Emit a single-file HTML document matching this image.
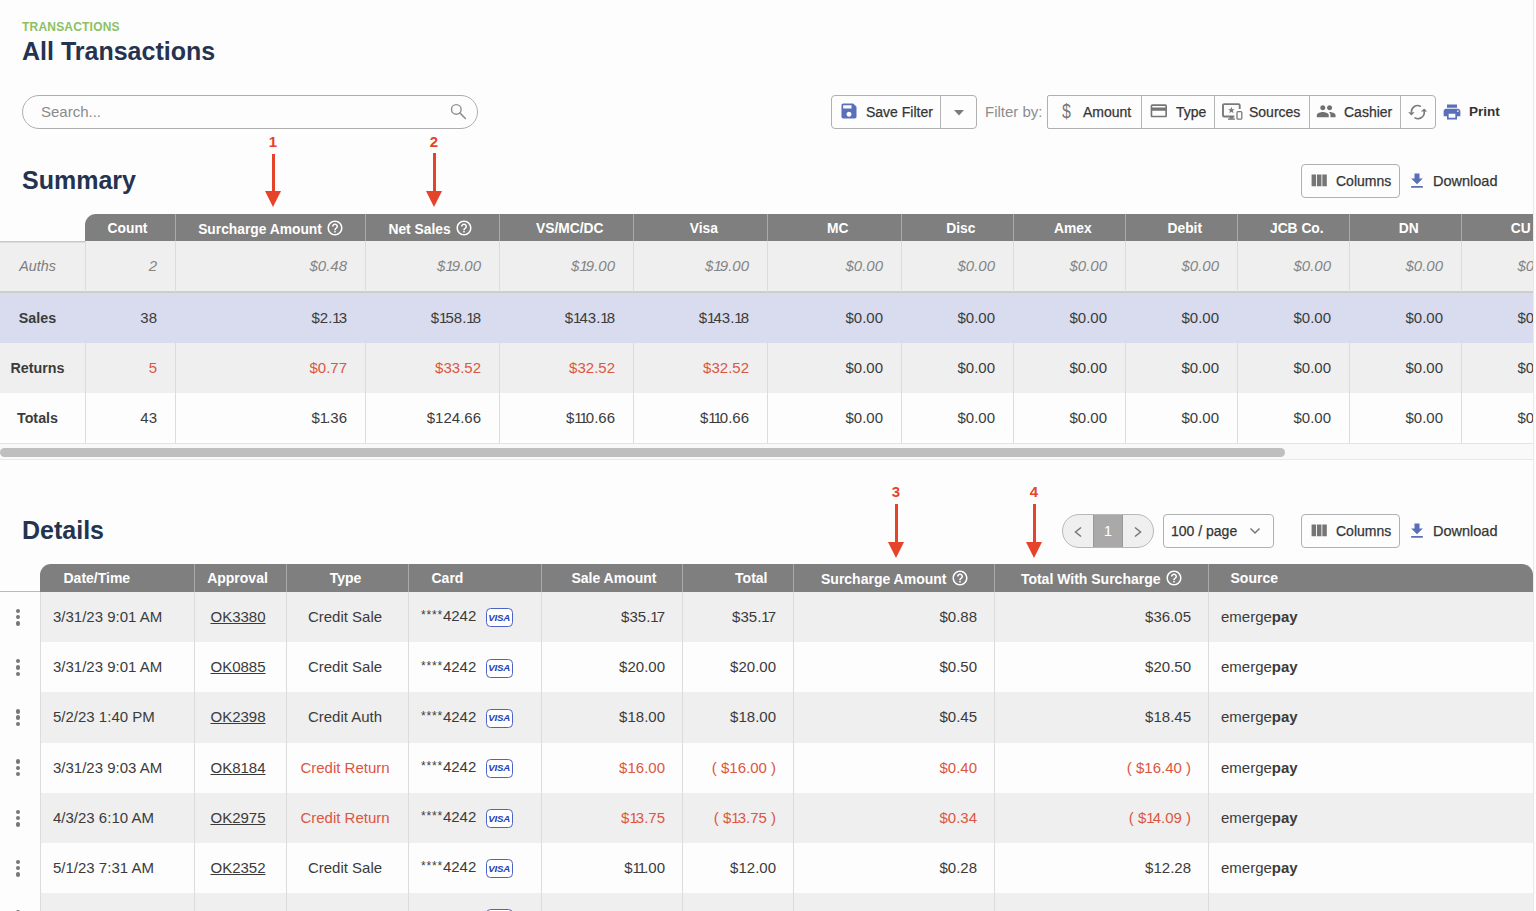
<!DOCTYPE html>
<html><head><meta charset="utf-8">
<style>
*{box-sizing:border-box;margin:0;padding:0}
html,body{width:1536px;height:911px;overflow:hidden;background:#fdfdfd;font-family:"Liberation Sans",sans-serif;color:#3b3b3b}
.abs{position:absolute}
.eyebrow{left:22px;top:20px;font-size:12px;letter-spacing:0.2px;color:#8cc063;font-weight:bold;line-height:14px}
.h1{left:22px;top:36px;font-size:25px;font-weight:bold;color:#24334f;line-height:30px}
.h2{font-size:25px;font-weight:bold;color:#24334f;line-height:30px}
.search{left:22px;top:95px;width:456px;height:33.5px;border:1.3px solid #aeaeae;border-radius:17px;background:#fdfdfd}
.search span{position:absolute;left:18px;top:7px;font-size:15px;color:#8a8a8a}
.btn{border:1.3px solid #b0b0b0;border-radius:4px;background:#fdfdfd;height:33px}
.txt{font-size:14px;color:#3a3a3a;line-height:16px;white-space:nowrap}
.red{color:#dc5642}
.wrap{overflow:hidden}
table{border-collapse:separate;border-spacing:0;table-layout:fixed}
th{background:#7f7f7f;color:#fff;font-weight:bold;font-size:13.8px;height:27px;padding:0;border-left:1px solid #a9a9a9;white-space:nowrap;line-height:16px}
td{padding:0;white-space:nowrap;font-size:15px;border-left:1px solid #dcdcdc;line-height:18px}
th.nb,td.nb{border-left:none;background:transparent}
.sum td{height:50px;text-align:right;padding-right:18px}
.sum th{padding-top:2px}
.sum .q{vertical-align:-3px}
.sum td.lab{text-align:center;padding-right:10px;font-weight:bold;font-size:14.3px;border-left:none}
.sum tr.auth td{font-style:italic;color:#858585;border-bottom:2px solid #cdcdcd;height:52px}
.sum tr.auth td.lab{font-weight:normal;color:#7d7d7d}
.sum tr.sales td{background:#d8dcee}
.sum tr.ret td{background:#efefef}
.sum tr.tot td{background:#fdfdfd;border-bottom:1px solid #e4e4e4;height:51px;padding-bottom:1px}
.sum tr.auth td{background:#efefef}
.sum tr.auth td.lab{box-shadow:inset 0 1.5px 0 #c8c8c8}
.q{display:inline-block;width:18px;height:18px;vertical-align:-4px;margin-left:4px}
.det td{height:50.2px;padding:0 17px 0 12px}
.det th{padding:0 25.5px 0 21.5px;font-size:14px;height:28px}
.det .q{vertical-align:-3px}
.det th.c{padding:0}
.det tr.o td{background:#efefef}
.det tr.e td{background:#fdfdfd}
.det td.kb{background:#fdfdfd !important;border-left:none;padding:0;position:relative}
.kb i{position:absolute;left:16px;width:4.4px;height:4.4px;border-radius:50%;background:#777}

.ast{font-size:12px;vertical-align:2px;letter-spacing:0.8px;margin-right:0px}
.visa{display:inline-block;position:relative;top:1px;width:27px;height:19px;border:1.6px solid #4b64c6;border-radius:4.5px;background:#fff;margin-left:9.5px;vertical-align:-3.5px}
.visa b{position:absolute;left:1.6px;top:3.5px;font-size:9.7px;line-height:10px;font-style:italic;font-weight:bold;color:#2342b3;letter-spacing:-0.2px}
.grp{position:absolute;top:95px;height:34px;border:1.3px solid #b0b0b0;background:#fdfdfd}
.dv{position:absolute;top:95px;width:1.5px;height:34px;background:#b4b4b4}
.lbl{position:absolute;font-size:14px;color:#353535;line-height:16px;white-space:nowrap;-webkit-text-stroke:0.25px #353535}
.n1{font-style:inherit;letter-spacing:-2px}
.arrow{position:absolute;width:15px}
.arrow b{position:absolute;left:0;width:15px;text-align:center;color:#e5432a;font-size:15px;font-weight:bold;line-height:15px}
</style></head><body>
<div class="abs eyebrow">TRANSACTIONS</div>
<div class="abs h1">All Transactions</div>
<div class="abs search"><span>Search...</span></div>
<div class="abs h2" style="left:22px;top:165px">Summary</div>
<div class="abs h2" style="left:22px;top:515px">Details</div>
<div class="abs wrap" style="left:0;top:214px;width:1533px;height:232px">
<table class="sum" style="width:1573px">
<colgroup><col style="width:85px"><col style="width:90px"><col style="width:190px"><col style="width:134px"><col style="width:134px"><col style="width:134px"><col style="width:134px"><col style="width:112px"><col style="width:112px"><col style="width:112px"><col style="width:112px"><col style="width:112px"><col style="width:112px"></colgroup>
<tr>
<th class="nb"></th>
<th style="border-left:none;border-top-left-radius:11px;padding-right:5px">Count</th>
<th style="padding-left:1px">Surcharge Amount<svg class=q viewBox="0 0 24 24"><path fill="#fff" d="M11 18h2v-2h-2v2zm1-16C6.48 2 2 6.48 2 12s4.48 10 10 10 10-4.48 10-10S17.52 2 12 2zm0 18c-4.41 0-8-3.59-8-8s3.59-8 8-8 8 3.59 8 8-3.59 8-8 8zm0-14c-2.21 0-4 1.79-4 4h2c0-1.1.9-2 2-2s2 .9 2 2c0 2-3 1.75-3 5h2c0-2.25 3-2.5 3-5 0-2.21-1.79-4-4-4z"/></svg></th>
<th style="padding-right:4px">Net Sales<svg class=q viewBox="0 0 24 24"><path fill="#fff" d="M11 18h2v-2h-2v2zm1-16C6.48 2 2 6.48 2 12s4.48 10 10 10 10-4.48 10-10S17.52 2 12 2zm0 18c-4.41 0-8-3.59-8-8s3.59-8 8-8 8 3.59 8 8-3.59 8-8 8zm0-14c-2.21 0-4 1.79-4 4h2c0-1.1.9-2 2-2s2 .9 2 2c0 2-3 1.75-3 5h2c0-2.25 3-2.5 3-5 0-2.21-1.79-4-4-4z"/></svg></th>
<th style="padding-left:6.6px">VS/MC/DC</th>
<th style="padding-left:6.6px">Visa</th>
<th style="padding-left:6.6px">MC</th>
<th style="padding-left:6.6px">Disc</th>
<th style="padding-left:6.6px">Amex</th>
<th style="padding-left:6.6px">Debit</th>
<th style="padding-left:6.6px">JCB Co.</th>
<th style="padding-left:6.6px">DN</th>
<th style="padding-left:6.6px">CU</th>
</tr>
<tr class="auth"><td class="lab">Auths</td>
<td>2</td>
<td>$0.48</td>
<td>$<i class=n1>1</i>9.00</td>
<td>$<i class=n1>1</i>9.00</td>
<td>$<i class=n1>1</i>9.00</td>
<td>$0.00</td>
<td>$0.00</td>
<td>$0.00</td>
<td>$0.00</td>
<td>$0.00</td>
<td>$0.00</td>
<td>$0.00</td>
</tr>
<tr class="sales"><td class="lab">Sales</td>
<td>38</td>
<td>$2.<i class=n1>1</i>3</td>
<td>$<i class=n1>1</i>58.<i class=n1>1</i>8</td>
<td>$<i class=n1>1</i>43.<i class=n1>1</i>8</td>
<td>$<i class=n1>1</i>43.<i class=n1>1</i>8</td>
<td>$0.00</td>
<td>$0.00</td>
<td>$0.00</td>
<td>$0.00</td>
<td>$0.00</td>
<td>$0.00</td>
<td>$0.00</td>
</tr>
<tr class="ret"><td class="lab">Returns</td>
<td class="red">5</td>
<td class="red">$0.77</td>
<td class="red">$33.52</td>
<td class="red">$32.52</td>
<td class="red">$32.52</td>
<td>$0.00</td>
<td>$0.00</td>
<td>$0.00</td>
<td>$0.00</td>
<td>$0.00</td>
<td>$0.00</td>
<td>$0.00</td>
</tr>
<tr class="tot"><td class="lab">Totals</td>
<td>43</td>
<td>$<i class=n1>1</i>.36</td>
<td>$124.66</td>
<td>$<i class=n1>1</i><i class=n1>1</i>0.66</td>
<td>$<i class=n1>1</i><i class=n1>1</i>0.66</td>
<td>$0.00</td>
<td>$0.00</td>
<td>$0.00</td>
<td>$0.00</td>
<td>$0.00</td>
<td>$0.00</td>
<td>$0.00</td>
</tr>
</table></div>
<div class="abs wrap" style="left:0;top:564px;width:1533px;height:347px">
<table class="det" style="width:1533px">
<colgroup><col style="width:40px"><col style="width:154px"><col style="width:92px"><col style="width:122px"><col style="width:133px"><col style="width:141px"><col style="width:111px"><col style="width:201px"><col style="width:214px"><col style="width:325px"></colgroup>
<tr>
<th class="nb" style="border-bottom:1.4px solid #bababa"></th>
<th style="text-align:left;padding-left:23.5px;border-left:none;border-top-left-radius:11px;">Date/Time</th>
<th class="c" style="text-align:center;padding-right:6px;">Approval</th>
<th class="c" style="text-align:center;padding-right:4px;">Type</th>
<th style="text-align:left;padding-left:22.5px;">Card</th>
<th style="text-align:right;">Sale Amount</th>
<th style="text-align:right;">Total</th>
<th style="text-align:right;">Surcharge Amount<svg class=q viewBox="0 0 24 24"><path fill="#fff" d="M11 18h2v-2h-2v2zm1-16C6.48 2 2 6.48 2 12s4.48 10 10 10 10-4.48 10-10S17.52 2 12 2zm0 18c-4.41 0-8-3.59-8-8s3.59-8 8-8 8 3.59 8 8-3.59 8-8 8zm0-14c-2.21 0-4 1.79-4 4h2c0-1.1.9-2 2-2s2 .9 2 2c0 2-3 1.75-3 5h2c0-2.25 3-2.5 3-5 0-2.21-1.79-4-4-4z"/></svg></th>
<th style="text-align:right;">Total With Surcharge<svg class=q viewBox="0 0 24 24"><path fill="#fff" d="M11 18h2v-2h-2v2zm1-16C6.48 2 2 6.48 2 12s4.48 10 10 10 10-4.48 10-10S17.52 2 12 2zm0 18c-4.41 0-8-3.59-8-8s3.59-8 8-8 8 3.59 8 8-3.59 8-8 8zm0-14c-2.21 0-4 1.79-4 4h2c0-1.1.9-2 2-2s2 .9 2 2c0 2-3 1.75-3 5h2c0-2.25 3-2.5 3-5 0-2.21-1.79-4-4-4z"/></svg></th>
<th style="text-align:left;border-top-right-radius:11px;">Source</th>
</tr>
<tr class="o">
<td class="kb"><i style="top:16.8px"></i><i style="top:23.1px"></i><i style="top:29.4px"></i></td>
<td>3/31/23 9:01 AM</td>
<td style="text-align:center"><u>OK3380</u></td>
<td style="text-align:center" class="">Credit Sale</td>
<td><span style="position:relative;top:-1.5px"><span class="ast">****</span>4242</span><span class="visa"><b>VISA</b></span></td>
<td style="text-align:right" class="">$35.<i class=n1>1</i>7</td>
<td style="text-align:right" class="">$35.<i class=n1>1</i>7</td>
<td style="text-align:right" class="">$0.88</td>
<td style="text-align:right" class="">$36.05</td>
<td>emerge<b>pay</b></td>
</tr>
<tr class="e">
<td class="kb"><i style="top:16.8px"></i><i style="top:23.1px"></i><i style="top:29.4px"></i></td>
<td>3/31/23 9:01 AM</td>
<td style="text-align:center"><u>OK0885</u></td>
<td style="text-align:center" class="">Credit Sale</td>
<td><span style="position:relative;top:-1.5px"><span class="ast">****</span>4242</span><span class="visa"><b>VISA</b></span></td>
<td style="text-align:right" class="">$20.00</td>
<td style="text-align:right" class="">$20.00</td>
<td style="text-align:right" class="">$0.50</td>
<td style="text-align:right" class="">$20.50</td>
<td>emerge<b>pay</b></td>
</tr>
<tr class="o">
<td class="kb"><i style="top:16.8px"></i><i style="top:23.1px"></i><i style="top:29.4px"></i></td>
<td>5/2/23 1:40 PM</td>
<td style="text-align:center"><u>OK2398</u></td>
<td style="text-align:center" class="">Credit Auth</td>
<td><span style="position:relative;top:-1.5px"><span class="ast">****</span>4242</span><span class="visa"><b>VISA</b></span></td>
<td style="text-align:right" class="">$18.00</td>
<td style="text-align:right" class="">$18.00</td>
<td style="text-align:right" class="">$0.45</td>
<td style="text-align:right" class="">$18.45</td>
<td>emerge<b>pay</b></td>
</tr>
<tr class="e">
<td class="kb"><i style="top:16.8px"></i><i style="top:23.1px"></i><i style="top:29.4px"></i></td>
<td>3/31/23 9:03 AM</td>
<td style="text-align:center"><u>OK8184</u></td>
<td style="text-align:center" class=" red">Credit Return</td>
<td><span style="position:relative;top:-1.5px"><span class="ast">****</span>4242</span><span class="visa"><b>VISA</b></span></td>
<td style="text-align:right" class=" red">$16.00</td>
<td style="text-align:right" class=" red">( $16.00 )</td>
<td style="text-align:right" class=" red">$0.40</td>
<td style="text-align:right" class=" red">( $16.40 )</td>
<td>emerge<b>pay</b></td>
</tr>
<tr class="o">
<td class="kb"><i style="top:16.8px"></i><i style="top:23.1px"></i><i style="top:29.4px"></i></td>
<td>4/3/23 6:10 AM</td>
<td style="text-align:center"><u>OK2975</u></td>
<td style="text-align:center" class=" red">Credit Return</td>
<td><span style="position:relative;top:-1.5px"><span class="ast">****</span>4242</span><span class="visa"><b>VISA</b></span></td>
<td style="text-align:right" class=" red">$<i class=n1>1</i>3.75</td>
<td style="text-align:right" class=" red">( $<i class=n1>1</i>3.75 )</td>
<td style="text-align:right" class=" red">$0.34</td>
<td style="text-align:right" class=" red">( $<i class=n1>1</i>4.09 )</td>
<td>emerge<b>pay</b></td>
</tr>
<tr class="e">
<td class="kb"><i style="top:16.8px"></i><i style="top:23.1px"></i><i style="top:29.4px"></i></td>
<td>5/1/23 7:31 AM</td>
<td style="text-align:center"><u>OK2352</u></td>
<td style="text-align:center" class="">Credit Sale</td>
<td><span style="position:relative;top:-1.5px"><span class="ast">****</span>4242</span><span class="visa"><b>VISA</b></span></td>
<td style="text-align:right" class="">$<i class=n1>1</i><i class=n1>1</i>.00</td>
<td style="text-align:right" class="">$12.00</td>
<td style="text-align:right" class="">$0.28</td>
<td style="text-align:right" class="">$12.28</td>
<td>emerge<b>pay</b></td>
</tr>
<tr class="o">
<td class="kb"><i style="top:16.8px"></i><i style="top:23.1px"></i><i style="top:29.4px"></i></td>
<td>5/1/23 7:31 AM</td>
<td style="text-align:center"><u>OK2353</u></td>
<td style="text-align:center" class="">Credit Sale</td>
<td><span style="position:relative;top:-1.5px"><span class="ast">****</span>4242</span><span class="visa"><b>VISA</b></span></td>
<td style="text-align:right" class="">$<i class=n1>1</i><i class=n1>1</i>.00</td>
<td style="text-align:right" class="">$12.00</td>
<td style="text-align:right" class="">$0.28</td>
<td style="text-align:right" class="">$12.28</td>
<td>emerge<b>pay</b></td>
</tr>
</table></div>
<svg class="abs" style="left:448px;top:101px" width="20" height="20" viewBox="0 0 20 20"><circle cx="8.3" cy="8.4" r="4.8" fill="none" stroke="#8f8f8f" stroke-width="1.4"/><line x1="11.8" y1="11.9" x2="17.4" y2="17.5" stroke="#8f8f8f" stroke-width="1.6" stroke-linecap="round"/></svg>
<div class="grp" style="left:831px;width:146px;border-radius:4px"></div>
<div class="dv" style="left:940px;width:1px"></div>
<svg class="abs" style="left:838.5px;top:101.3px" width="20.0" height="20.0" viewBox="0 0 24 24" fill="#5a6fb9"><path d="M17 3H5c-1.11 0-2 .9-2 2v14c0 1.1.89 2 2 2h14c1.1 0 2-.9 2-2V7l-4-4zm-5 16c-1.66 0-3-1.34-3-3s1.34-3 3-3 3 1.34 3 3-1.34 3-3 3zm3-10H5V5h10v4z"/></svg>
<div class="lbl" style="left:866px;top:104px">Save Filter</div>
<svg class="abs" style="left:953.5px;top:110px" width="10" height="6"><polygon points="0,0 10,0 5,5.5" fill="#7a7a7a"/></svg>
<div class="lbl" style="left:985px;top:104px;font-size:15px;color:#8e8e8e;-webkit-text-stroke:0">Filter by:</div>
<div class="grp" style="left:1047px;width:389px;border-radius:2px 4px 4px 2px"></div>
<div class="dv" style="left:1141px;width:1px"></div>
<div class="dv" style="left:1214px;width:1px"></div>
<div class="dv" style="left:1309px;width:1px"></div>
<div class="dv" style="left:1400px;width:1px"></div>
<div class="abs" style="left:1060.5px;top:100px;font-size:20px;line-height:22px;color:#777;font-weight:normal;transform:scaleX(0.8)">$</div>
<div class="lbl" style="left:1083px;top:104px">Amount</div>
<svg class="abs" style="left:1149.0px;top:101.0px" width="19.6" height="19.6" viewBox="0 0 24 24" fill="#757575"><path d="M20 4H4c-1.11 0-1.99.89-1.99 2L2 18c0 1.11.89 2 2 2h16c1.11 0 2-.89 2-2V6c0-1.11-.89-2-2-2zm0 14H4v-6h16v6zm0-10H4V6h16v2z"/></svg>
<div class="lbl" style="left:1176px;top:104px">Type</div>
<svg class="abs" style="left:1218px;top:100px" width="28" height="24" viewBox="0 0 28 24" fill="none" stroke="#7a7a7a"><path d="M21.7 9V5.2c0-0.6-0.5-1.1-1.1-1.1H6.1c-0.6 0-1.1 0.5-1.1 1.1v10.2c0 0.6 0.5 1.1 1.1 1.1h10.2" stroke-width="1.9"/><rect x="11.6" y="16.3" width="3.7" height="2.4" fill="#7a7a7a" stroke="none"/><rect x="10" y="18.4" width="6.9" height="1.4" fill="#7a7a7a" stroke="none"/><rect x="19" y="11.6" width="4.8" height="7.6" rx="0.9" stroke-width="1.3"/><polygon points="13.4,6.9 14.35,9.3 16.7,9.3 14.8,10.8 15.55,13.2 13.4,11.75 11.25,13.2 12.0,10.8 10.1,9.3 12.45,9.3" fill="#7a7a7a" stroke="none"/></svg>
<div class="lbl" style="left:1249px;top:104px">Sources</div>
<svg class="abs" style="left:1316.0px;top:101.2px" width="20.4" height="20.4" viewBox="0 0 24 24" fill="#707070"><path d="M16 11c1.66 0 2.99-1.34 2.99-3S17.660 5 16 5c-1.66 0-3 1.34-3 3s1.34 3 3 3zm-8 0c1.66 0 2.99-1.34 2.99-3S9.66 5 8 5C6.34 5 5 6.34 5 8s1.34 3 3 3zm0 2c-2.33 0-7 1.17-7 3.5V19h14v-2.5c0-2.330-4.67-3.5-7-3.5zm8 0c-.29 0-.62.02-.97.05 1.16.84 1.97 1.97 1.97 3.45V19h6v-2.5c0-2.33-4.67-3.5-7-3.5z"/></svg>
<div class="lbl" style="left:1344px;top:104px">Cashier</div>
<svg class="abs" style="left:1404px;top:100px" width="28" height="24" viewBox="0 0 28 24" fill="none"><path d="M16.4 6.2 A6.3 6.3 0 0 0 7.4 11.8" stroke="#7a7a7a" stroke-width="1.6" stroke-linecap="round"/><polygon points="4.2,12.2 10.6,12.2 7.4,15.6" fill="#7a7a7a"/><path d="M11 17.9 A6.3 6.3 0 0 0 20.2 11.6" stroke="#7a7a7a" stroke-width="1.6" stroke-linecap="round"/><polygon points="17,11.6 23.3,11.6 20.15,8.6" fill="#7a7a7a"/></svg>
<svg class="abs" style="left:1442.0px;top:101.5px" width="20.0" height="20.0" viewBox="0 0 24 24" fill="#5a6fb9"><path d="M19 8H5c-1.66 0-3 1.34-3 3v6h4v4h12v-4h4v-6c0-1.66-1.34-3-3-3zm-3 11H8v-5h8v5zm3-7c-.55 0-1-.45-1-1s.45-1 1-1 1 .45 1 1-.45 1-1 1zm-1-9H6v4h12V3z"/></svg>
<div class="lbl" style="left:1469px;top:104px;font-weight:bold;font-size:13.5px;color:#333;-webkit-text-stroke:0">Print</div>
<div class="abs btn" style="left:1301px;top:164px;width:99px;height:34px"></div>
<svg class="abs" style="left:1307.5px;top:169.5px" width="21.5" height="21.5" viewBox="0 0 24 24" fill="#757575"><path d="M10 18h5V5h-5v13zm-6 0h5V5H4v13zM16 5v13h5V5h-5z"/></svg>
<div class="lbl" style="left:1336px;top:173px">Columns</div>
<svg class="abs" style="left:1406.5px;top:170.5px" width="20.0" height="20.0" viewBox="0 0 24 24" fill="#5a6fb9"><path d="M19 9h-4V3H9v6H5l7 7 7-7zM5 18v2h14v-2H5z"/></svg>
<div class="lbl" style="left:1433px;top:173px;font-size:14.5px">Download</div>
<div class="abs" style="left:1062px;top:514px;width:92px;height:34px;border:1px solid #b8b8b8;border-radius:17px;background:#efefef;overflow:hidden"><div class="abs" style="left:30px;top:0;width:30px;height:32px;background:#a9a9a9;border-left:1px solid #999;border-right:1px solid #999"></div><div class="abs" style="left:30px;top:7px;width:30px;text-align:center;font-size:15px;line-height:18px;color:#fff">1</div></div>
<svg class="abs" style="left:1072px;top:524px" width="12" height="16" viewBox="0 0 12 16" fill="none" stroke="#777" stroke-width="1.5"><polyline points="9,3.5 3.5,8 9,12.5"/></svg>
<svg class="abs" style="left:1132px;top:524px" width="12" height="16" viewBox="0 0 12 16" fill="none" stroke="#777" stroke-width="1.5"><polyline points="3,3.5 8.5,8 3,12.5"/></svg>
<div class="abs btn" style="left:1163px;top:514px;width:111px;height:34px"></div>
<div class="lbl" style="left:1171px;top:523px;font-size:14px">100 / page</div>
<svg class="abs" style="left:1248px;top:525px" width="14" height="12" viewBox="0 0 14 12" fill="none" stroke="#777" stroke-width="1.5"><polyline points="2.5,3.5 7,8 11.5,3.5"/></svg>
<div class="abs btn" style="left:1301px;top:514px;width:99px;height:34px"></div>
<svg class="abs" style="left:1307.5px;top:519.5px" width="21.5" height="21.5" viewBox="0 0 24 24" fill="#757575"><path d="M10 18h5V5h-5v13zm-6 0h5V5H4v13zM16 5v13h5V5h-5z"/></svg>
<div class="lbl" style="left:1336px;top:523px">Columns</div>
<svg class="abs" style="left:1406.5px;top:520.5px" width="20.0" height="20.0" viewBox="0 0 24 24" fill="#5a6fb9"><path d="M19 9h-4V3H9v6H5l7 7 7-7zM5 18v2h14v-2H5z"/></svg>
<div class="lbl" style="left:1433px;top:523px;font-size:14.5px">Download</div>
<div class="abs" style="left:0;top:444px;width:1533px;height:16px;background:#f9f9f9;border-bottom:1px solid #e8e8e8"></div>
<div class="abs" style="left:-0.5px;top:448px;width:1285.5px;height:9px;background:#bfbfbf;border-radius:5px"></div>
<div class="abs" style="left:1533px;top:0;width:1px;height:911px;background:#e9e9e9"></div>
<div class="abs" style="left:265px;top:134px;width:16px;text-align:center;color:#e5432a;font-size:15px;font-weight:bold;line-height:15px">1</div>
<div class="abs" style="left:271.5px;top:154px;width:3px;height:39px;background:#e5432a"></div>
<svg class="abs" style="left:265.0px;top:191px" width="16" height="16"><polygon points="0,0 16,0 8,16" fill="#e5432a"/></svg>
<div class="abs" style="left:426px;top:134px;width:16px;text-align:center;color:#e5432a;font-size:15px;font-weight:bold;line-height:15px">2</div>
<div class="abs" style="left:432.5px;top:153px;width:3px;height:40px;background:#e5432a"></div>
<svg class="abs" style="left:426.0px;top:191px" width="16" height="16"><polygon points="0,0 16,0 8,16" fill="#e5432a"/></svg>
<div class="abs" style="left:888px;top:484px;width:16px;text-align:center;color:#e5432a;font-size:15px;font-weight:bold;line-height:15px">3</div>
<div class="abs" style="left:894.5px;top:504px;width:3px;height:40px;background:#e5432a"></div>
<svg class="abs" style="left:888.0px;top:542px" width="16" height="16"><polygon points="0,0 16,0 8,16" fill="#e5432a"/></svg>
<div class="abs" style="left:1026px;top:484px;width:16px;text-align:center;color:#e5432a;font-size:15px;font-weight:bold;line-height:15px">4</div>
<div class="abs" style="left:1032.5px;top:504px;width:3px;height:40px;background:#e5432a"></div>
<svg class="abs" style="left:1026.0px;top:542px" width="16" height="16"><polygon points="0,0 16,0 8,16" fill="#e5432a"/></svg>
</body></html>
